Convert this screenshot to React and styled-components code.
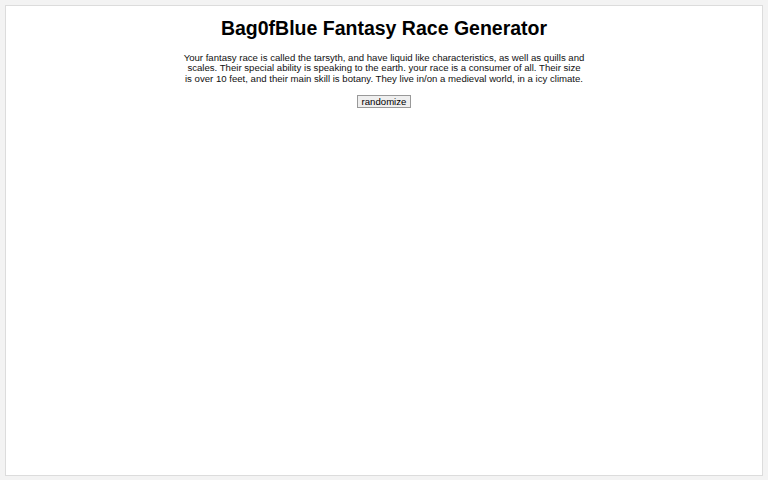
import React, { useState } from 'react';
import styled, { createGlobalStyle } from 'styled-components';

const GlobalStyle = createGlobalStyle`
  html, body {
    margin: 0;
    padding: 0;
    background: #f3f3f3;
    font-family: "Liberation Sans", Arial, sans-serif;
  }
`;

const races = {
  name: 'tarsyth',
  trait: 'liquid like',
  feature: 'quills and scales',
  ability: 'speaking to the earth',
  diet: 'a consumer of all',
  size: 'over 10 feet',
  skill: 'botany',
  world: 'medieval',
  climate: 'icy',
};

const App = () => {
  const [race] = useState(races);

  return (
    <>
      <GlobalStyle />
      <Page>
        <Card>
          <Title>Bag0fBlue Fantasy Race Generator</Title>
          <Description>
            Your fantasy race is called the {race.name}, and have {race.trait} characteristics,
            as well as {race.feature}. Their special ability is {race.ability}. your race is{' '}
            {race.diet}. Their size is {race.size}, and their main skill is {race.skill}. They
            live in/on a {race.world} world, in a {race.climate} climate.
          </Description>
          <Button type="button">randomize</Button>
        </Card>
      </Page>
    </>
  );
};

export default App;

const Page = styled.div`
  padding: 5px 5px 4px 5px;
  height: 480px;
  box-sizing: border-box;
  display: flex;
`;

const Card = styled.div`
  flex: 1;
  background: #fff;
  border: 1px solid #dcdcdc;
  display: flex;
  flex-direction: column;
  align-items: center;
  padding-top: 11px;
`;

const Title = styled.h1`
  margin: 0;
  font-size: 19.5px;
  line-height: 22px;
  font-weight: bold;
  color: #000;
`;

const Description = styled.p`
  margin: 13.5px 0 0;
  width: 401.5px;
  font-size: 9.6px;
  line-height: 10.8px;
  text-align: center;
  color: #111;
`;

const Button = styled.button`
  margin-top: 10px;
  font-family: "Liberation Sans", Arial, sans-serif;
  font-size: 9.6px;
  line-height: 11px;
  padding: 0 4px;
  background: #efefef;
  border: 1px solid #999;
  border-radius: 0;
  color: #000;
`;
